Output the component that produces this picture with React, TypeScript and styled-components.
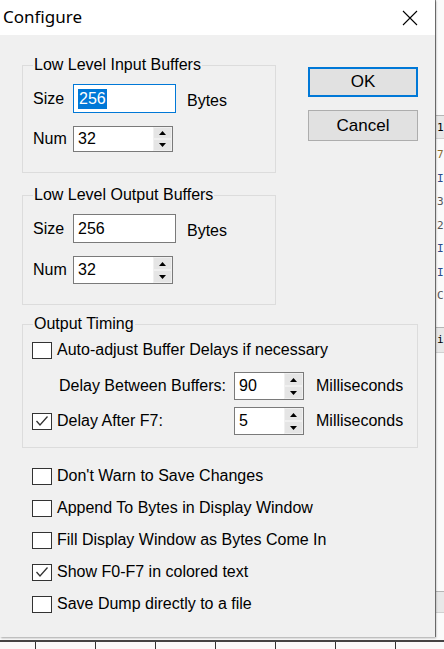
import React from 'react';
import styled, { createGlobalStyle } from 'styled-components';

const GlobalStyle = createGlobalStyle`
  html, body {
    margin: 0;
    padding: 0;
    background: #fafafa;
  }
  * {
    box-sizing: border-box;
  }
`;

const Page = styled.div`
  display: grid;
  grid-template-columns: 435px 9px;
  grid-template-rows: 637px 12px;
  width: 444px;
  height: 649px;
  overflow: hidden;
  background: #fafafa;
  font-family: 'Liberation Sans', Arial, sans-serif;
  font-size: 16px;
  color: #000;
`;

const Dialog = styled.div`
  display: flex;
  flex-direction: column;
  background: #f0f0f0;
  box-shadow: 1px 1px 2px rgba(0, 0, 0, 0.35);
  position: relative;
  z-index: 1;
`;

const TitleBar = styled.div`
  height: 35px;
  flex: none;
  background: #fff;
  display: flex;
  align-items: center;
  justify-content: space-between;
  padding: 0 17px 0 3px;
`;

const Title = styled.span`
  font-family: 'Noto Sans', 'Open Sans', sans-serif;
  font-size: 17px;
  margin-top: -2px;
`;

const Body = styled.div`
  flex: 1;
  padding: 21px 0 0 22px;
  display: flex;
  flex-direction: column;
`;

const TopRow = styled.div`
  display: flex;
  gap: 32px;
`;

const GroupColumn = styled.div`
  width: 254px;
  display: flex;
  flex-direction: column;
  gap: 13px;
`;

const Group = styled.fieldset<{ $width?: number; $top?: number; $bottom?: number; $gap?: number }>`
  margin: ${p => p.$gap ?? 0}px 0 0 0;
  width: ${p => (p.$width ? `${p.$width}px` : 'auto')};
  border: 1px solid #dcdcdc;
  border-radius: 0;
  padding: ${p => p.$top ?? 10}px 10px ${p => p.$bottom ?? 20}px 10px;
  min-inline-size: 0;
`;

const Legend = styled.legend`
  padding: 0 1px;
  margin-left: 0;
  line-height: 18px;
  font-size: 16px;
`;

const FieldRow = styled.div<{ $height: number }>`
  display: flex;
  align-items: center;
  height: ${p => p.$height}px;
`;

const FieldLabel = styled.span`
  width: 40px;
`;

const Unit = styled.span`
  margin-left: 11px;
  margin-top: 4px;
`;

const Rows = styled.div`
  display: flex;
  flex-direction: column;
  gap: 13px;
`;

const TextBox = styled.div<{ $width: number; $focused?: boolean }>`
  width: ${p => p.$width}px;
  height: 100%;
  background: #fff;
  border: 1px solid ${p => (p.$focused ? '#0078d7' : '#7a7a7a')};
  display: flex;
  align-items: center;
  padding-left: 4px;
`;

const Selected = styled.span`
  background: #0078d7;
  color: #fff;
  padding: 0 1px;
  line-height: 20px;
`;

const Spin = styled.div`
  margin-left: auto;
  width: 20px;
  height: 100%;
  display: flex;
  flex-direction: column;
  border-left: 1px solid #fff;
`;

const SpinButton = styled.div`
  flex: 1;
  background: #e5e5e5;
  border: 1px solid #f0f0f0;
  display: flex;
  align-items: center;
  justify-content: center;
`;

const ButtonColumn = styled.div`
  width: 110px;
  padding-top: 11px;
  display: flex;
  flex-direction: column;
  gap: 13px;
`;

const DialogButton = styled.div<{ $default?: boolean }>`
  height: ${p => (p.$default ? 30 : 31)}px;
  background: #e1e1e1;
  border: ${p => (p.$default ? '2px solid #0078d7' : '1px solid #adadad')};
  display: flex;
  align-items: center;
  justify-content: center;
  font-size: 17px;
`;

const TimingGrid = styled.div`
  display: grid;
  grid-template-columns: 202px 70px auto;
  grid-template-rows: 25px 28px 28px;
  row-gap: 7px;
  align-items: center;
  margin-left: -1px;
`;

const Indented = styled.span`
  padding-left: 27px;
`;

const Millis = styled.span`
  padding-left: 12px;
`;

const CheckRow = styled.label<{ $span?: boolean }>`
  display: flex;
  align-items: center;
  gap: 5px;
  height: 20px;
  grid-column: ${p => (p.$span ? '1 / -1' : 'auto')};
  align-self: ${p => (p.$span ? 'start' : 'center')};
  white-space: nowrap;
`;

const Box = styled.span`
  width: 20px;
  height: 17px;
  flex: none;
  border: 1px solid #333;
  background: #fff;
  display: flex;
  align-items: center;
  justify-content: center;
`;

const CheckList = styled.div`
  display: flex;
  flex-direction: column;
  padding: 12px 0 0 10px;
`;

const ListRow = styled.div`
  height: 32px;
  display: flex;
  align-items: center;
`;

const Strip = styled.div`
  background: #fafafa;
  display: flex;
  flex-direction: column;
  font-family: 'DejaVu Sans Mono', monospace;
  font-size: 11px;
  overflow: hidden;
  border-left: 1px solid #8a8a8a;
`;

const StripBand = styled.div<{ $height: number }>`
  height: ${p => p.$height}px;
  flex: none;
  background: #e8e8e8;
  border-top: 1px solid #b5b5b5;
  border-bottom: 1px solid #d0d0d0;
  padding-left: 1px;
  display: flex;
  align-items: center;
`;

const StripGlyph = styled.div<{ $color: string }>`
  height: 23.5px;
  flex: none;
  padding-left: 1px;
  color: ${p => p.$color};
  line-height: 23px;
`;

const StripGap = styled.div<{ $height: number }>`
  height: ${p => p.$height}px;
  flex: none;
`;

const Ruler = styled.div`
  grid-column: 1 / -1;
  margin-top: 3px;
  border-top: 2px solid #444;
  padding-left: 35px;
  display: flex;
  background: #fafafa;
`;

const Tick = styled.div`
  width: 60px;
  flex: none;
  height: 10px;
  border-left: 1px solid #333;
`;

const Arrow = ({ up }: { up?: boolean }) => (
  <svg width="7" height="4" viewBox="0 0 7 4">
    <polygon points={up ? '0,4 7,4 3.5,0' : '0,0 7,0 3.5,4'} fill="#000" />
  </svg>
);

const SpinBox = ({ value, width }: { value: string; width: number }) => (
  <TextBox $width={width}>
    {value}
    <Spin>
      <SpinButton>
        <Arrow up />
      </SpinButton>
      <SpinButton>
        <Arrow />
      </SpinButton>
    </Spin>
  </TextBox>
);

const Check = ({ checked }: { checked?: boolean }) => (
  <Box>
    {checked && (
      <svg width="14" height="12" viewBox="0 0 14 12">
        <polyline points="1.5,6 5,10 12.5,1.5" fill="none" stroke="#333" strokeWidth="1.3" />
      </svg>
    )}
  </Box>
);

const options = [
  { label: "Don't Warn to Save Changes", checked: false },
  { label: 'Append To Bytes in Display Window', checked: false },
  { label: 'Fill Display Window as Bytes Come In', checked: false },
  { label: 'Show F0-F7 in colored text', checked: true },
  { label: 'Save Dump directly to a file', checked: false },
];

const stripGlyphs = [
  { ch: '7', color: '#8a6a2a' },
  { ch: 'I', color: '#2a4a8a' },
  { ch: '3', color: '#555' },
  { ch: '2', color: '#555' },
  { ch: 'I', color: '#2a4a8a' },
  { ch: 'I', color: '#2a4a8a' },
  { ch: 'C', color: '#555' },
];

const App = () => {
  return (
    <Page>
      <GlobalStyle />
      <Dialog>
        <TitleBar>
          <Title>Configure</Title>
          <svg width="16" height="16" viewBox="0 0 16 16">
            <path d="M1 1 L15 15 M15 1 L1 15" stroke="#000" strokeWidth="1.1" />
          </svg>
        </TitleBar>
        <Body>
          <TopRow>
            <GroupColumn>
              <Group>
                <Legend>Low Level Input Buffers</Legend>
                <Rows>
                  <FieldRow $height={29}>
                    <FieldLabel>Size</FieldLabel>
                    <TextBox $width={103} $focused>
                      <Selected>256</Selected>
                    </TextBox>
                    <Unit>Bytes</Unit>
                  </FieldRow>
                  <FieldRow $height={26}>
                    <FieldLabel>Num</FieldLabel>
                    <SpinBox value="32" width={100} />
                  </FieldRow>
                </Rows>
              </Group>
              <Group>
                <Legend>Low Level Output Buffers</Legend>
                <Rows>
                  <FieldRow $height={29}>
                    <FieldLabel>Size</FieldLabel>
                    <TextBox $width={103}>256</TextBox>
                    <Unit>Bytes</Unit>
                  </FieldRow>
                  <FieldRow $height={28}>
                    <FieldLabel>Num</FieldLabel>
                    <SpinBox value="32" width={100} />
                  </FieldRow>
                </Rows>
              </Group>
            </GroupColumn>
            <ButtonColumn>
              <DialogButton $default>OK</DialogButton>
              <DialogButton>Cancel</DialogButton>
            </ButtonColumn>
          </TopRow>

          <Group $width={396} $gap={10} $top={7} $bottom={12}>
            <Legend>Output Timing</Legend>
            <TimingGrid>
              <CheckRow $span>
                <Check />
                Auto-adjust Buffer Delays if necessary
              </CheckRow>
              <Indented>Delay Between Buffers:</Indented>
              <FieldRow $height={28}>
                <SpinBox value="90" width={70} />
              </FieldRow>
              <Millis>Milliseconds</Millis>
              <CheckRow>
                <Check checked />
                Delay After F7:
              </CheckRow>
              <FieldRow $height={28}>
                <SpinBox value="5" width={70} />
              </FieldRow>
              <Millis>Milliseconds</Millis>
            </TimingGrid>
          </Group>

          <CheckList>
            {options.map(o => (
              <ListRow key={o.label}>
                <CheckRow>
                  <Check checked={o.checked} />
                  {o.label}
                </CheckRow>
              </ListRow>
            ))}
          </CheckList>
        </Body>
      </Dialog>
      <Strip>
        <StripGap $height={115} />
        <StripBand $height={24}>1</StripBand>
        <StripGap $height={4} />
        {stripGlyphs.map((g, i) => (
          <StripGlyph key={i} $color={g.color}>
            {g.ch}
          </StripGlyph>
        ))}
        <StripGap $height={19} />
        <StripBand $height={26}>i</StripBand>
        <StripGap $height={238} />
        <StripBand $height={22} />
      </Strip>
      <Ruler>
        {Array.from({ length: 7 }).map((_, i) => (
          <Tick key={i} />
        ))}
      </Ruler>
    </Page>
  );
};

export default App;
